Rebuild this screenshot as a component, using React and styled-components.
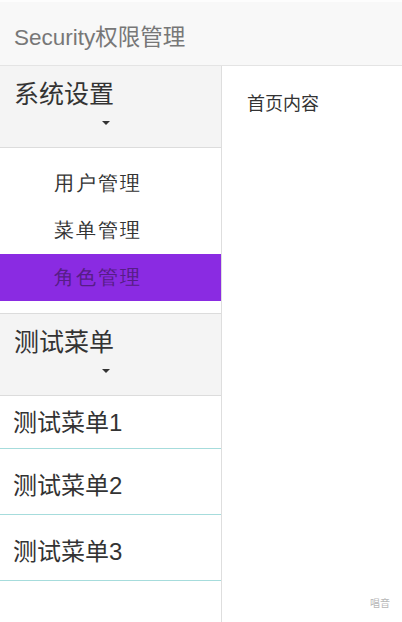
import React from "react";
import styled, { createGlobalStyle } from "styled-components";

const GlobalStyle = createGlobalStyle`
  body {
    margin: 0;
    background: #fff;
    font-family: "Liberation Sans", "Noto Sans CJK SC", sans-serif;
    color: #333;
  }
`;

const groups = [
  {
    title: "系统设置",
    kind: "sub",
    items: ["用户管理", "菜单管理", "角色管理"],
    active: 2,
  },
  {
    title: "测试菜单",
    kind: "plain",
    items: ["测试菜单1", "测试菜单2", "测试菜单3"],
  },
];

function App() {
  return (
    <Page>
      <GlobalStyle />
      <Navbar>
        <Brand>Security权限管理</Brand>
      </Navbar>
      <Body>
        <Sidebar>
          {groups.map((g) => (
            <Group key={g.title}>
              <GroupHeader>
                <GroupTitle>{g.title}</GroupTitle>
                <Caret />
              </GroupHeader>
              {g.kind === "sub" ? (
                <SubList>
                  {g.items.map((item, i) => (
                    <SubItem key={item} $active={i === g.active}>
                      {item}
                    </SubItem>
                  ))}
                </SubList>
              ) : (
                <PlainList>
                  {g.items.map((item, i) => (
                    <PlainItem key={item} $first={i === 0}>
                      {item}
                    </PlainItem>
                  ))}
                </PlainList>
              )}
            </Group>
          ))}
        </Sidebar>
        <Content>首页内容</Content>
      </Body>
      <Watermark>唱音</Watermark>
    </Page>
  );
}

const Page = styled.div`
  position: relative;
  height: 622px;
  display: flex;
  flex-direction: column;
  overflow: hidden;
`;

const Navbar = styled.header`
  height: 63px;
  background-color: #f8f8f8;
  border-top: 2px solid #fdfdfd;
  border-bottom: 1px solid #e4e4e4;
  display: flex;
  align-items: center;
  padding-left: 14px;
  flex-shrink: 0;
`;

const Brand = styled.div`
  font-size: 22.5px;
  color: #777;
  margin-top: 2px;
`;

const Body = styled.div`
  flex: 1;
  display: flex;
`;

const Sidebar = styled.nav`
  width: 221px;
  border-right: 1px solid #dedede;
  display: flex;
  flex-direction: column;
`;

const Group = styled.section`
  display: flex;
  flex-direction: column;
  & + & {
    border-top: 1px solid #dcdcdc;
  }
`;

const GroupHeader = styled.div`
  height: 82px;
  box-sizing: border-box;
  background-color: #f4f4f4;
  border-bottom: 1px solid #dcdcdc;
  padding: 14px 0 0 14px;
  display: flex;
  flex-direction: column;
  align-items: flex-start;
`;

const GroupTitle = styled.div`
  font-size: 25px;
  line-height: 29px;
  color: #333;
`;

const Caret = styled.span`
  width: 0;
  height: 0;
  margin: 12px 0 0 88px;
  border-top: 4px solid #333;
  border-left: 4px solid transparent;
  border-right: 4px solid transparent;
`;

const SubList = styled.ul`
  list-style: none;
  margin: 0;
  padding: 12px 0;
`;

const SubItem = styled.li`
  height: 47px;
  display: flex;
  align-items: center;
  padding-left: 54px;
  font-family: "AR PL UKai CN", KaiTi, "Liberation Serif", serif;
  font-size: 20px;
  letter-spacing: 2px;
  color: ${(p) => (p.$active ? "#561d86" : "#333")};
  background-color: ${(p) => (p.$active ? "#8a2be2" : "transparent")};
`;

const PlainList = styled.ul`
  list-style: none;
  margin: 0;
  padding: 0;
`;

const PlainItem = styled.li`
  padding: ${(p) => (p.$first ? "12px 0 11px" : "22px 0 14px")};
  padding-left: 13px;
  font-size: 24px;
  line-height: 29px;
  color: #333;
  border-bottom: 1px solid #a6dcdc;
`;

const Content = styled.main`
  flex: 1;
  padding: 25px 0 0 25px;
  font-size: 18px;
  line-height: 26px;
  color: #333;
`;

const Watermark = styled.div`
  position: absolute;
  right: 12px;
  bottom: 12px;
  font-size: 10px;
  color: #999;
  opacity: 0.7;
`;

export default App;
